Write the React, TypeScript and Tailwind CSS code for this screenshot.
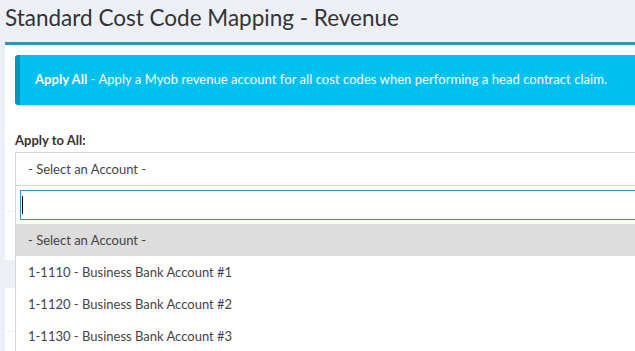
const accounts = [
  '1-1110 - Business Bank Account #1',
  '1-1120 - Business Bank Account #2',
  '1-1130 - Business Bank Account #3',
]

export default function App() {
  return (
    <div className="w-[635px] h-[351px] overflow-hidden bg-[#ecf0f5] font-['Lato',sans-serif] text-[#333]">
      <div className="w-[720px]">
        {/* Page header */}
        <h1 className="h-[42px] pl-[5px] pt-[3px] text-[22.5px] leading-[30px] font-normal text-[#333]">
          Standard Cost Code Mapping - Revenue
        </h1>

        {/* Main box */}
        <div className="ml-[5px] h-[218px] bg-white border-t-[3px] border-[#3c8dbc] flex flex-col">
          <div className="p-[10px] pb-0">
            <div className="h-[50px] flex items-center pl-[15px] bg-[#00c0ef] border-l-[5px] border-[#0097bc] rounded-[3px] text-white text-[13px] tracking-[0.05px]">
              <span className="font-bold">Apply All</span>
              <span>&nbsp;- Apply a Myob revenue account for all cost codes when performing a head contract claim.</span>
            </div>

            <div className="mt-[25px]">
              <label className="block text-[13px] leading-[20px] font-bold text-[#333] mb-[2px]">Apply to All:</label>
              <div className="relative">
                <div className="h-[34px] border border-[#d2d6de] flex items-center pl-[12px] pt-[1px] text-[13px] text-[#444]">
                  - Select an Account -
                </div>

                {/* Open dropdown */}
                <div className="absolute left-0 right-0 top-[34px] z-10 bg-white border-x border-[#d2d6de]">
                  <div className="p-[4px]">
                    <div className="h-[30px] border border-[#3c8dbc] flex items-center pl-[1px]">
                      <span className="w-px h-[18px] bg-black" />
                    </div>
                  </div>
                  <ul className="text-[13px] text-[#444]">
                    <li className="h-[32px] flex items-center pl-[12px] pt-[1px] bg-[#ddd]">- Select an Account -</li>
                    {accounts.map((a) => (
                      <li key={a} className="h-[32px] flex items-center pl-[12px] pt-[1px]">
                        {a}
                      </li>
                    ))}
                  </ul>
                </div>
              </div>
            </div>
          </div>
          <div className="mt-auto h-[49px] border-t border-[#f4f4f4]" />
        </div>

        {/* Next box */}
        <div className="ml-[5px] mt-[28px] h-[100px] bg-white">
          <div className="h-[44px] border-b border-[#f4f4f4]" />
        </div>
      </div>
    </div>
  )
}
